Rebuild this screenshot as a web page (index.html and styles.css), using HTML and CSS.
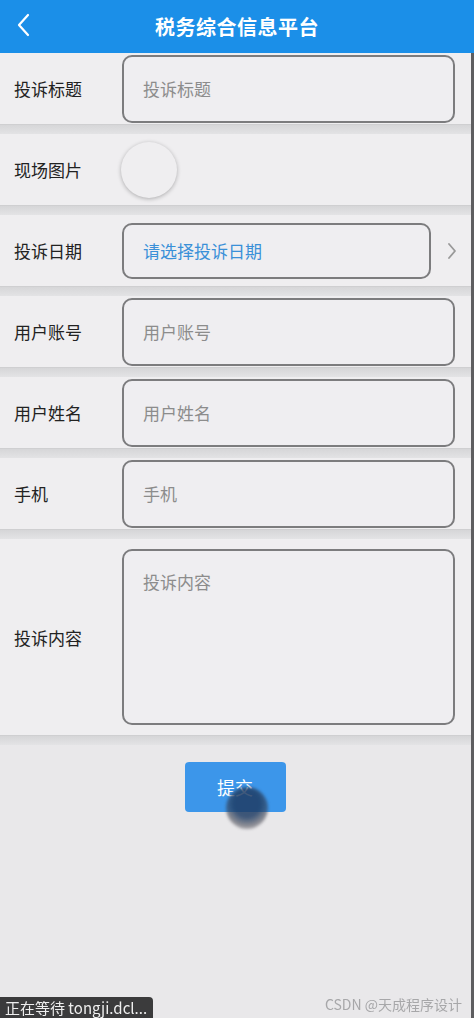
FILE: index.html
```html
<!DOCTYPE html>
<html lang="zh-CN">
<head>
<meta charset="UTF-8" />
<meta name="viewport" content="width=device-width, initial-scale=1.0" />
<title>税务综合信息平台</title>
<link rel="stylesheet" href="styles.css">
</head>
<body>

<!-- 顶部导航 -->
<div class="topbar">
  <svg class="back" width="14" height="24" viewBox="0 0 14 24">
    <path d="M12 2 L3 12 L12 22" fill="none" stroke="#fff" stroke-width="2.2" stroke-linecap="round" stroke-linejoin="round"/>
  </svg>
  <div class="title">税务综合信息平台</div>
</div>

<div class="page">
  <div class="row">
    <div class="label">投诉标题</div>
    <div class="field">投诉标题</div>
  </div>
  <div class="gap"></div>

  <div class="row">
    <div class="label">现场图片</div>
    <div class="upload"></div>
  </div>
  <div class="gap"></div>

  <div class="row">
    <div class="label">投诉日期</div>
    <div class="field date">请选择投诉日期</div>
    <svg class="arrow" width="10" height="18" viewBox="0 0 10 18">
      <path d="M2 2 L8 9 L2 16" fill="none" stroke="#999" stroke-width="1.8" stroke-linecap="round" stroke-linejoin="round"/>
    </svg>
  </div>
  <div class="gap"></div>

  <div class="row">
    <div class="label">用户账号</div>
    <div class="field">用户账号</div>
  </div>
  <div class="gap"></div>

  <div class="row">
    <div class="label">用户姓名</div>
    <div class="field">用户姓名</div>
  </div>
  <div class="gap"></div>

  <div class="row">
    <div class="label">手机</div>
    <div class="field">手机</div>
  </div>
  <div class="gap"></div>

  <div class="row tall">
    <div class="label">投诉内容</div>
    <div class="field area">投诉内容</div>
  </div>
  <div class="gap"></div>

  <div class="actions">
    <button class="submit">提交</button>
    <span class="touch"></span>
  </div>
</div>

<div class="status">正在等待 tongji.dcl...</div>
<div class="mark">CSDN @天成程序设计</div>

</body>
</html>
```

FILE: styles.css
```css
body {
  margin: 0;
  background: #e9e8ea;
  font-family: "Noto Sans CJK SC", "Noto Sans", sans-serif;
  height: 1018px;
  overflow: hidden;
}

.topbar {
  height: 53px;
  background: #1b8fe8;
  display: flex;
  align-items: center;
  justify-content: center;
  position: relative;
}
.topbar .back {
  position: absolute;
  left: 16px;
  top: 13px;
}
.topbar .title {
  color: #fff;
  font-size: 20px;
  font-weight: bold;
  letter-spacing: 0.5px;
}

.page {
  border-right: 3px solid #5e5e60;
  height: 965px;
  box-sizing: border-box;
}

.row {
  display: flex;
  align-items: center;
  height: 71px;
  background: #efeef0;
  padding-right: 16px;
  border-bottom: 1px solid #cfcfd1;
}
.row.tall {
  height: 196px;
}

.label {
  width: 108px;
  flex: none;
  padding-left: 14px;
  font-size: 17px;
  color: #222;
}

.field {
  flex: 1;
  height: 68px;
  box-sizing: border-box;
  border: 2px solid #7c7c7e;
  border-radius: 10px;
  background: #efeef1;
  display: flex;
  align-items: center;
  padding-left: 19px;
  font-size: 17px;
  color: #8c8c8c;
}
.field.date {
  height: 56px;
  color: #3a90d8;
  margin-right: 16px;
}
.field.area {
  height: 176px;
  align-items: flex-start;
  padding-top: 18px;
}

.arrow {
  flex: none;
  margin-right: -2px;
}

.upload {
  width: 56px;
  height: 56px;
  border-radius: 50%;
  background: #efeef0;
  box-shadow: 0 1px 4px rgba(0,0,0,0.28);
  margin-left: -1px;
}

.gap {
  height: 9px;
  background: linear-gradient(#d6d6d8, #e3e3e5);
}

.actions {
  display: flex;
  justify-content: center;
  padding-top: 17px;
  position: relative;
}
.submit {
  width: 101px;
  height: 50px;
  border: none;
  border-radius: 4px;
  background: #3c96ea;
  color: #fff;
  font-family: inherit;
  font-size: 18px;
  margin-left: -1px;
}
/* 按下时的触摸点 */
.touch {
  position: absolute;
  left: 226px;
  top: 42px;
  width: 42px;
  height: 42px;
  border-radius: 50%;
  background: radial-gradient(circle at 50% 40%, rgba(30,60,100,0.85) 40%, rgba(70,70,80,0.55) 68%, rgba(90,90,95,0) 100%);
  filter: blur(1.5px);
}

.status {
  position: fixed;
  left: 0;
  bottom: 0;
  width: 153px;
  height: 21px;
  box-sizing: border-box;
  background: #3b3b3c;
  border-top-right-radius: 4px;
  color: #eee;
  font-size: 15px;
  line-height: 22px;
  padding-left: 5px;
  white-space: nowrap;
  overflow: hidden;
}

.mark {
  position: fixed;
  right: 12px;
  bottom: 4px;
  color: #a7a7a9;
  font-size: 14px;
}
```
